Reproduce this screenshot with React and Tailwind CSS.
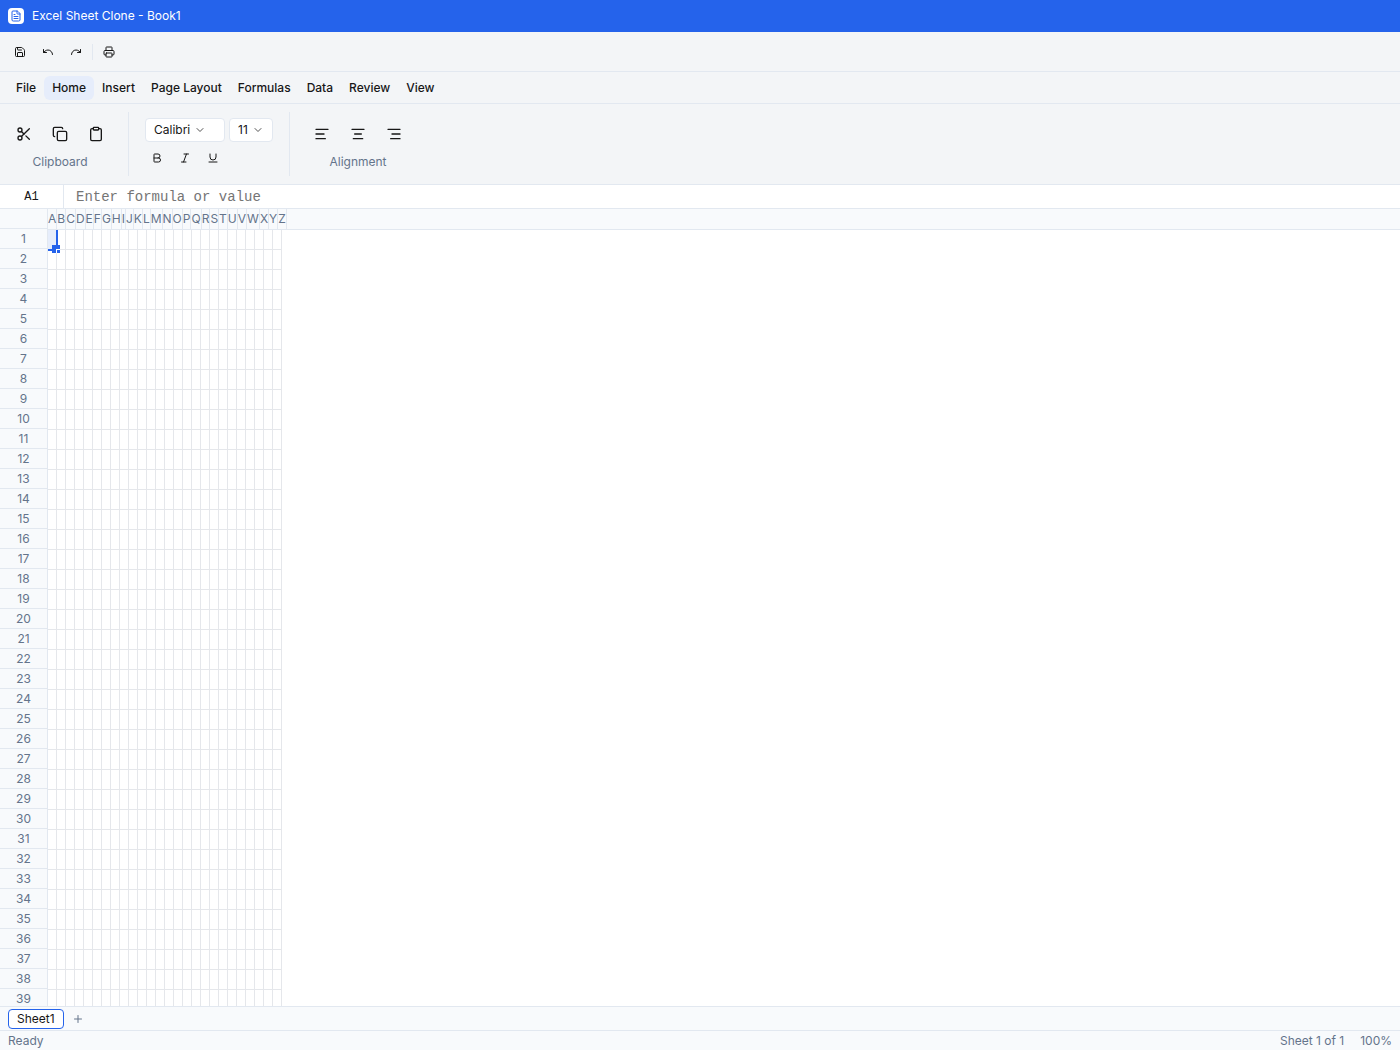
import { useState } from "react";
import {
  AlignCenter,
  AlignLeft,
  AlignRight,
  Bold,
  ChevronDown,
  Clipboard,
  Copy,
  FileText,
  Italic,
  Plus,
  Printer,
  Redo,
  Save,
  Scissors,
  Underline,
  Undo,
} from "lucide-react";

const MENUS = ["File", "Home", "Insert", "Page Layout", "Formulas", "Data", "Review", "View"];
const COLUMNS = "ABCDEFGHIJKLMNOPQRSTUVWXYZ".split("");
const ROWS = Array.from({ length: 39 }, (_, i) => i + 1);

function IconButton({ label, icon: Icon, large }) {
  return (
    <button
      type="button"
      aria-label={label}
      className={
        large
          ? "flex size-8 items-center justify-center rounded-md hover:bg-gray-200"
          : "flex size-6 items-center justify-center rounded-md hover:bg-gray-200"
      }
    >
      <Icon className={large ? "size-4" : "size-3"} />
    </button>
  );
}

function RibbonSelect({ label, options, className, chevronClassName }) {
  return (
    <div className="relative">
      <select
        aria-label={label}
        className={`block h-6 appearance-none rounded border border-slate-200 bg-white pl-2 text-xs ${className}`}
      >
        {options.map((option) => (
          <option key={option}>{option}</option>
        ))}
      </select>
      <ChevronDown
        className={`pointer-events-none absolute top-1.5 size-3 text-neutral-600 ${chevronClassName}`}
      />
    </div>
  );
}

function TitleBar() {
  return (
    <header className="flex h-8 shrink-0 items-center gap-2 bg-[#2563eb] px-2 text-white">
      <div className="flex size-4 items-center justify-center rounded-sm bg-white">
        <FileText className="size-3 text-[#2563eb]" />
      </div>
      <h1 className="text-xs">Excel Sheet Clone - Book1</h1>
    </header>
  );
}

function QuickAccess() {
  return (
    <div className="flex h-10 shrink-0 items-center gap-1 border-b border-slate-200 bg-[#f3f5f7] px-2">
      <IconButton label="Save" icon={Save} />
      <IconButton label="Undo" icon={Undo} />
      <IconButton label="Redo" icon={Redo} />
      <div className="h-4 w-px bg-slate-200" />
      <IconButton label="Print" icon={Printer} />
    </div>
  );
}

function MenuTabs() {
  const [active, setActive] = useState("Home");

  return (
    <nav className="flex h-8 shrink-0 items-center border-b border-slate-200 bg-[#f3f5f7] px-2">
      {MENUS.map((menu) => (
        <button
          key={menu}
          type="button"
          onClick={() => setActive(menu)}
          className={
            menu === active
              ? "h-6 rounded-md bg-[#e6edfb] px-2 text-xs font-medium"
              : "h-6 rounded-md px-2 text-xs font-medium"
          }
        >
          {menu}
        </button>
      ))}
    </nav>
  );
}

function Ribbon() {
  return (
    <div className="flex shrink-0 gap-4 border-b border-slate-200 bg-[#f3f5f7] p-2">
      {/* Clipboard */}
      <div className="flex h-16 flex-col items-center justify-center gap-1 border-r border-slate-200 pr-4">
        <div className="flex gap-1">
          <IconButton label="Cut" icon={Scissors} large />
          <IconButton label="Copy" icon={Copy} large />
          <IconButton label="Paste" icon={Clipboard} large />
        </div>
        <span className="text-xs text-[#64748b]">Clipboard</span>
      </div>

      {/* Font */}
      <div className="flex h-16 flex-col justify-center gap-1 border-r border-slate-200 pr-4">
        <div className="flex gap-1">
          <RibbonSelect
            label="Font"
            options={["Calibri", "Arial", "Times New Roman"]}
            className="w-20"
            chevronClassName="right-[19px]"
          />
          <RibbonSelect
            label="Font size"
            options={["11", "12", "14"]}
            className="w-11"
            chevronClassName="right-[9px]"
          />
        </div>
        <div className="flex gap-1">
          <IconButton label="Bold" icon={Bold} />
          <IconButton label="Italic" icon={Italic} />
          <IconButton label="Underline" icon={Underline} />
        </div>
      </div>

      {/* Alignment */}
      <div className="flex h-16 flex-col items-center justify-center gap-1">
        <div className="flex gap-1">
          <IconButton label="Align left" icon={AlignLeft} large />
          <IconButton label="Align center" icon={AlignCenter} large />
          <IconButton label="Align right" icon={AlignRight} large />
        </div>
        <span className="text-xs text-[#64748b]">Alignment</span>
      </div>
    </div>
  );
}

function FormulaBar() {
  const [formula, setFormula] = useState("");

  return (
    <div className="flex h-6 shrink-0 items-stretch border-b border-slate-200 bg-white">
      <div className="flex w-16 items-center justify-center border-r border-slate-200 font-['Liberation_Mono',monospace] text-xs">
        A1
      </div>
      <input
        aria-label="Formula"
        placeholder="Enter formula or value"
        value={formula}
        onChange={(e) => setFormula(e.target.value)}
        className="min-w-0 flex-1 px-3 font-['Liberation_Mono',monospace] text-sm outline-none placeholder:text-[#757575]"
      />
    </div>
  );
}

// outline and drag handle, a pixel larger than the cell under it
function Selection() {
  return (
    <div className="absolute top-0 left-0 z-10 h-[21px] w-2.5 border-r-2 border-b-2 border-[#2563eb] bg-[#e6edfb]">
      <div className="absolute -right-1 -bottom-1 flex size-2 items-end justify-end bg-[#2563eb]">
        <div className="size-1 border-t border-l border-white" />
      </div>
    </div>
  );
}

function Grid() {
  return (
    <main className="flex min-h-0 flex-1 overflow-hidden bg-white">
      {/* Row numbers */}
      <div className="w-12 shrink-0 border-r border-slate-200 bg-slate-50 text-center text-xs text-[#64748b]">
        <div className="h-5 border-b border-slate-200" />
        {ROWS.map((row) => (
          <div key={row} className="h-5 border-b border-slate-200 leading-5">
            {row}
          </div>
        ))}
      </div>

      <div className="min-w-0 flex-1">
        {/* Column letters */}
        <div className="flex h-[21px] border-b border-slate-200 bg-slate-50 text-xs text-[#64748b]">
          {COLUMNS.map((col) => (
            <div key={col} className="border-r border-slate-200 leading-5">
              {col}
            </div>
          ))}
        </div>

        {/* Cells */}
        {ROWS.map((row) => (
          <div key={row} className="flex h-5">
            {COLUMNS.map((col) => (
              <div key={col} className="relative w-[9px] border-r border-b border-gray-200">
                {row === 1 && col === "A" && <Selection />}
              </div>
            ))}
          </div>
        ))}
      </div>
    </main>
  );
}

function SheetTabs() {
  return (
    <div className="flex h-6 shrink-0 items-center gap-1 border-t border-slate-200 bg-slate-50 px-2">
      <button
        type="button"
        className="h-5 rounded border border-[#2563eb] bg-white px-2 text-xs"
      >
        Sheet1
      </button>
      <button
        type="button"
        aria-label="Add sheet"
        className="flex size-5 items-center justify-center text-[#64748b]"
      >
        <Plus className="size-3" />
      </button>
    </div>
  );
}

function StatusBar() {
  return (
    <footer className="flex h-5 shrink-0 items-center justify-between border-t border-slate-200 bg-slate-50 px-2 text-xs text-[#64748b]">
      <span>Ready</span>
      <div className="flex gap-4">
        <span>Sheet 1 of 1</span>
        <span>100%</span>
      </div>
    </footer>
  );
}

export default function App() {
  return (
    <div className="flex h-screen flex-col bg-white font-[Inter,sans-serif] text-neutral-900">
      <TitleBar />
      <QuickAccess />
      <MenuTabs />
      <Ribbon />
      <FormulaBar />
      <Grid />
      <SheetTabs />
      <StatusBar />
    </div>
  );
}
